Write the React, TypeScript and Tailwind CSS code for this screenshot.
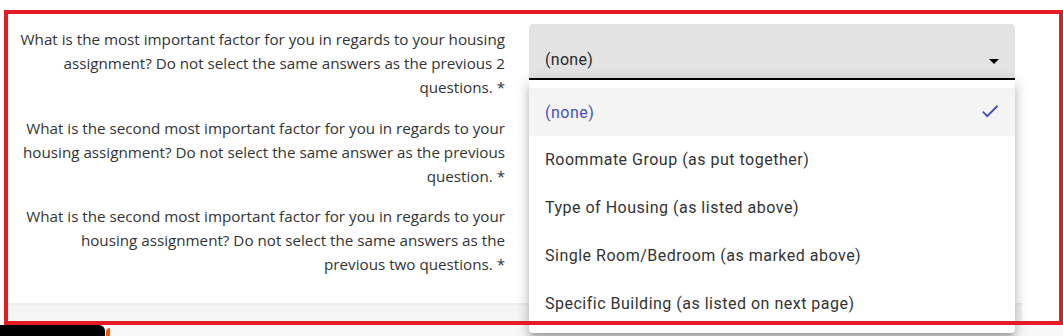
const questions: string[][] = [
  [
    'What is the most important factor for you in regards to your housing',
    'assignment? Do not select the same answers as the previous 2',
    'questions. *',
  ],
  [
    'What is the second most important factor for you in regards to your',
    'housing assignment? Do not select the same answer as the previous',
    'question. *',
  ],
  [
    'What is the second most important factor for you in regards to your',
    'housing assignment? Do not select the same answers as the',
    'previous two questions. *',
  ],
];

const options = [
  '(none)',
  'Roommate Group (as put together)',
  'Type of Housing (as listed above)',
  'Single Room/Bedroom (as marked above)',
  'Specific Building (as listed on next page)',
];

function CheckMark() {
  return (
    <svg viewBox="0 0 24 24" className="size-[22px] fill-[#4452b8]">
      <path d="M9 16.17 4.83 12l-1.42 1.41L9 19 21 7l-1.41-1.41z" />
    </svg>
  );
}

function SelectMenu() {
  return (
    <div className="absolute left-[529px] top-[80px] z-10 w-[486px] rounded-b-[4px] bg-white pt-2 pb-[5px] font-['Roboto',sans-serif] text-[16px] tracking-[0.5px] shadow-[0_5px_5px_-3px_rgba(0,0,0,0.2),0_8px_10px_1px_rgba(0,0,0,0.14),0_3px_14px_2px_rgba(0,0,0,0.12)]">
      {options.map((o, i) => (
        <div
          key={o}
          className={
            i === 0
              ? 'flex h-12 items-center justify-between bg-[#f4f4f4] pl-4 pr-[14px] text-[#4452b8]'
              : 'flex h-12 items-center pl-4 text-[#333]'
          }
        >
          <span className={i === 0 ? 'pt-[1px]' : ''}>{o}</span>
          {i === 0 ? <span className="-mt-[2px]"><CheckMark /></span> : null}
        </div>
      ))}
    </div>
  );
}

export default function App() {
  return (
    <div className="relative h-[336px] w-[1063px] overflow-hidden bg-white">
      <div className="flex h-[303px]">
        <div className="w-[505px] shrink-0 pt-[27px] text-right font-['Open_Sans',sans-serif] text-[15.2px] leading-6 text-[#333]">
          {questions.map((q, i) => (
            <p key={i} className={i === 0 ? 'whitespace-nowrap' : i === 1 ? 'mt-[17px] whitespace-nowrap' : 'mt-4 whitespace-nowrap'}>
              {q.map((line, j) => (
                <span key={j} className="block">
                  {line}
                </span>
              ))}
            </p>
          ))}
        </div>
        <div className="ml-6 w-[486px] shrink-0 pt-6">
          <div className="flex h-14 items-start justify-between rounded-t-[4px] border-b-2 border-black bg-[#e3e3e3] pl-4 pr-4 pt-6 font-['Roboto',sans-serif] text-[16px] leading-6 tracking-[0.3px] text-[#2a2a2a]">
            <span>(none)</span>
            <svg viewBox="0 0 10 5" className="mt-[11px] h-[5px] w-[10px] fill-black">
              <path d="M0 0h10L5 5z" />
            </svg>
          </div>
        </div>
      </div>

      <div className="flex h-[22px]">
        <div className="ml-1 w-[1018px] bg-[#f5f5f5] shadow-[inset_0_2px_2px_rgba(0,0,0,0.04)]" />
      </div>
      <div className="flex h-[11px] items-end bg-[#f8f8f8]">
        <div className="h-[11px] w-[105px] rounded-tr-[6px] bg-black" />
        <div className="ml-px h-[8px] w-[4px] rounded-tl-[4px] bg-[#ff5200]" />
      </div>

      <SelectMenu />

      {/* red annotation frame drawn over the screenshot */}
      <div className="pointer-events-none absolute left-1 top-[10px] z-20 h-[315px] w-[1059px] border-4 border-[#e51c23]" />
    </div>
  );
}
